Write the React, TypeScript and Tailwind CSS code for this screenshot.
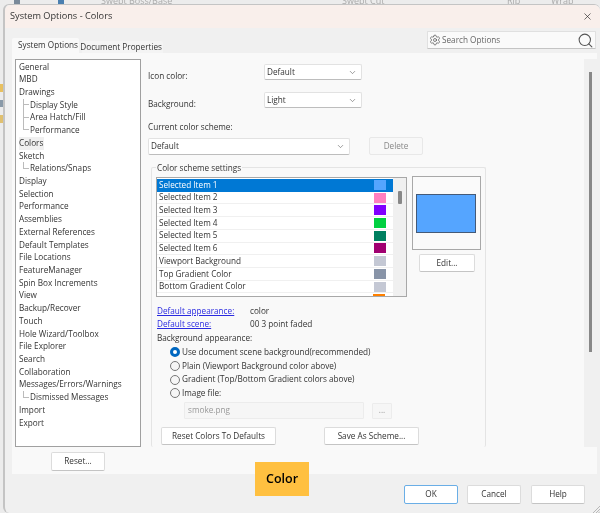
import React from "react";
import { ChevronDown, Search, Settings, X } from "lucide-react";

const treeRows: [string, number, boolean?][] = [
  ["General", 0], ["MBD", 0], ["Drawings", 0],
  ["Display Style", 1, true], ["Area Hatch/Fill", 1, true], ["Performance", 1, false],
  ["Colors", 0], ["Sketch", 0], ["Relations/Snaps", 1, false],
  ["Display", 0], ["Selection", 0], ["Performance", 0], ["Assemblies", 0],
  ["External References", 0], ["Default Templates", 0], ["File Locations", 0],
  ["FeatureManager", 0], ["Spin Box Increments", 0], ["View", 0], ["Backup/Recover", 0],
  ["Touch", 0], ["Hole Wizard/Toolbox", 0], ["File Explorer", 0], ["Search", 0],
  ["Collaboration", 0], ["Messages/Errors/Warnings", 0], ["Dismissed Messages", 1, false],
  ["Import", 0], ["Export", 0],
];

const colorRows = [
  ["Selected Item 1", "bg-[#55a5ff]"],
  ["Selected Item 2", "bg-[#ff80c0]"],
  ["Selected Item 3", "bg-[#8000ff]"],
  ["Selected Item 4", "bg-[#00d040]"],
  ["Selected Item 5", "bg-[#008060]"],
  ["Selected Item 6", "bg-[#a00070]"],
  ["Viewport Background", "bg-[#c4c8d4]"],
  ["Top Gradient Color", "bg-[#8894a8]"],
  ["Bottom Gradient Color", "bg-[#c4c8d4]"],
];

function Btn({ children, className = "" }: { children: React.ReactNode; className?: string }) {
  return (
    <button className={`flex items-center justify-center rounded-[2px] border border-[#dcdcdc] border-b-[#c4c4c4] bg-white text-[#333] ${className}`}>
      {children}
    </button>
  );
}

function Select({ label, className = "" }: { label: string; className?: string }) {
  return (
    <div className={`flex items-center justify-between rounded-[2px] border border-[#e2e2e2] border-b-[#bdbdbd] bg-white pl-[2px] pr-[4px] text-[#333] ${className}`}>
      <span>{label}</span>
      <ChevronDown size={9} strokeWidth={1.5} className="text-[#555]" />
    </div>
  );
}

function Radio({ label, checked = false }: { label: string; checked?: boolean }) {
  return (
    <div className="flex h-[13.7px] items-center">
      {checked ? (
        <span className="h-[10px] w-[10px] rounded-full border-[3px] border-[#0067c0] bg-white" />
      ) : (
        <span className="h-[10px] w-[10px] rounded-full border border-[#777] bg-[#f6f6f6]" />
      )}
      <span className="ml-[2px] text-[#333]">{label}</span>
    </div>
  );
}

export default function App() {
  return (
    <div className="relative flex h-[513px] w-[600px] flex-col overflow-hidden bg-[#ececec] text-[8.2px] leading-[12.72px] font-['Open_Sans',sans-serif] blur-[0.3px]">
      <div className="flex h-[4px] shrink-0 overflow-hidden text-[#aaa]">
        <span className="ml-[14px] h-[4px] w-[6px] bg-[#7a8a9a]" />
        <span className="ml-[38px] h-[4px] w-[6px] bg-[#4a7fb0]" />
        <span className="ml-[37px] mt-[-5px] w-[241px] text-[9px]">Swept Boss/Base</span>
        <span className="mt-[-5px] w-[165px] text-[9px]">Swept Cut</span>
        <span className="mt-[-5px] w-[44px] text-[9px]">Rib</span>
        <span className="mt-[-5px] text-[9px]">Wrap</span>
      </div>
      <div className="flex min-h-0 flex-1">
        <div className="flex w-[3px] shrink-0 flex-col">
          <span className="mt-[80px] h-[8px] w-[3px] bg-[#e8c060]" />
          <span className="mt-[8px] h-[7px] w-[3px] bg-[#8a9aa8]" />
          <span className="mt-[8px] h-[8px] w-[3px] bg-[#e0c070]" />
        </div>
        <div className="flex min-w-0 flex-1 flex-col rounded-t-[6px] rounded-bl-[6px] border-l-2 border-t border-[#c4c4c4] bg-[#f0f0f0]">
          <div className="flex h-[23px] shrink-0 items-center justify-between rounded-t-[6px] bg-[#f9efeb] pl-[5px] pr-[7px]">
            <span className="text-[9.2px] text-[#333]">System Options - Colors</span>
            <X size={11} strokeWidth={1.4} className="text-[#222]" />
          </div>
          <div className="flex h-[25px] shrink-0 items-end justify-between pl-[7px] pr-[4px]">
            <div className="flex items-end">
              <div className="flex h-[15px] w-[67px] items-center justify-end rounded-t-[2px] bg-[#f9f9f9] pr-[1px] text-[#333]">System Options</div>
              <div className="ml-[3px] flex h-[12px] w-[81px] items-center justify-end whitespace-nowrap rounded-t-[2px] bg-[#f4f4f4] pr-[1px] text-[#333]">Document Properties</div>
            </div>
            <div className="mb-[4px] flex h-[18px] w-[169px] items-center rounded-[1px] border border-[#e0e0e0] border-b-[#c4c4c4] bg-[#fafafa] pl-[1px] pr-[1px] text-[#666]">
              <Settings size={12} strokeWidth={1.3} className="text-[#444]" />
              <span className="ml-[1px] flex-1">Search Options</span>
              <Search size={17} strokeWidth={1.5} className="text-[#555]" />
            </div>
          </div>
          <div className="ml-[7px] mr-[3px] flex h-[421px] shrink-0 flex-col bg-[#f9f9f9] pl-[3px] pt-[6px]">
            <div className="flex h-[388px] shrink-0">
              <div className="h-[388px] w-[126px] shrink-0 border border-[#a0a0a0] bg-white pl-[2px] pt-[0.5px] text-[#333]">
                {treeRows.map(([name, level, more], i) => (
                  <div key={i} className="flex h-[12.72px] items-center">
                    {level === 1 && (
                      <span className={`ml-[5px] h-full w-[6px] border-l border-[#bbb] ${more ? "" : "!h-1/2 self-start"}`}>
                        <span className={`block w-full border-b border-[#bbb] ${more ? "h-1/2" : "h-full"}`} />
                      </span>
                    )}
                    <span className={name === "Colors" ? "ml-[1px] bg-[#f0f0f0] pr-[1px]" : "ml-[1px]"}>{name}</span>
                  </div>
                ))}
              </div>
              <div className="ml-[7px] flex min-w-0 flex-1 flex-col text-[#333]">
                <div className="mt-[5px] flex h-[16px] items-center">
                  <span className="mt-[8px] w-[116px]">Icon color:</span>
                  <Select label="Default" className="h-[16px] w-[98px]" />
                </div>
                <div className="mt-[12px] flex h-[16px] items-center">
                  <span className="mt-[8px] w-[116px]">Background:</span>
                  <Select label="Light" className="h-[16px] w-[98px]" />
                </div>
                <div className="mt-[13px] h-[13px]">Current color scheme:</div>
                <div className="mt-[3px] flex h-[18px] items-center">
                  <Select label="Default" className="h-[17px] w-[202px]" />
                  <Btn className="ml-[19px] h-[18px] w-[54px] !border-[#e8e8e8] !bg-[#f8f8f8] !text-[#888]">Delete</Btn>
                </div>
                <div className="relative ml-[3px] mt-[12px] h-[280px] w-[335px] rounded-[2px] border border-b-0 border-[#e4e4e4] pl-[4px] pt-[9px]">
                  <span className="absolute left-[4px] top-[-6px] bg-[#f9f9f9] px-[1px]">Color scheme settings</span>
                  <div className="flex">
                    <div className="flex h-[120px] w-[251px] shrink-0 overflow-hidden border border-[#a8a8a8] bg-white">
                      <div className="flex-1 overflow-hidden pt-[1px]">
                        {colorRows.map(([name, c], i) => (
                          <div key={name} className={`flex h-[12.72px] items-center justify-between pl-[2px] pr-[7px] ${i === 0 ? "bg-[#0078d4] text-white" : "border-b border-[#f0f0f0]"}`}>
                            <span>{name}</span>
                            <span className={`h-[10px] w-[12px] ${c}`} />
                          </div>
                        ))}
                        <div className="ml-[216px] mt-[1px] h-[10px] w-[12px] bg-[#ff8000]" />
                      </div>
                      <div className="flex w-[13px] shrink-0 justify-center bg-[#f0f0f0] pt-[13px]">
                        <div className="h-[13px] w-[4px] rounded-[1px] bg-[#888]" />
                      </div>
                    </div>
                    <div className="ml-[5px] mt-[-1px] flex flex-col">
                      <div className="flex h-[74px] w-[69px] items-center justify-start border border-[#a8a8a8] bg-[#fafafa] pl-[3px]">
                        <div className="h-[39px] w-[60px] border border-[#445a78] bg-[#55a5ff]" />
                      </div>
                      <Btn className="ml-[7px] mt-[4px] h-[18px] w-[56px]">Edit...</Btn>
                    </div>
                  </div>
                  <div className="mt-[8px] flex h-[13.2px] items-center pl-[1px]">
                    <a className="w-[93px] text-[#2a2ae0] underline">Default appearance:</a>
                    <span>color</span>
                  </div>
                  <div className="flex h-[13.2px] items-center pl-[1px]">
                    <a className="w-[93px] text-[#2a2ae0] underline">Default scene:</a>
                    <span>00 3 point faded</span>
                  </div>
                  <div className="flex h-[13.2px] items-center pl-[1px]">Background appearance:</div>
                  <div className="ml-[14px] mt-[1px]">
                    <Radio checked label="Use document scene background(recommended)" />
                    <Radio label="Plain (Viewport Background color above)" />
                    <Radio label="Gradient (Top/Bottom Gradient colors above)" />
                    <Radio label="Image file:" />
                  </div>
                  <div className="ml-[28px] mt-[2px] flex items-center">
                    <div className="flex h-[17px] w-[180px] items-center rounded-[1px] border border-[#ececec] bg-[#f6f6f6] pl-[3px] text-[#999]">smoke.png</div>
                    <div className="ml-[8px] flex h-[16px] w-[20px] items-center justify-center rounded-[1px] border border-[#ececec] bg-[#f6f6f6] text-[#999]">...</div>
                  </div>
                  <div className="ml-[5px] mt-[8px] flex">
                    <Btn className="h-[18px] w-[115px]">Reset Colors To Defaults</Btn>
                    <Btn className="ml-[48px] h-[18px] w-[95px]">Save As Scheme...</Btn>
                  </div>
                </div>
              </div>
              <div className="flex h-[388px] w-[13px] shrink-0 justify-center bg-[#f0f0f0] pt-[13px]">
                <div className="h-[280px] w-[3px] bg-[#888]" />
              </div>
            </div>
            <div className="ml-[36px] mt-[5px]">
              <Btn className="h-[19px] w-[54px]">Reset...</Btn>
            </div>
          </div>
          <div className="flex flex-1 items-start justify-end pr-[15px] pt-[11px]">
            <Btn className="h-[19px] w-[54px] !border-[#6aaee6]">OK</Btn>
            <Btn className="ml-[9px] h-[19px] w-[54px]">Cancel</Btn>
            <Btn className="ml-[10px] h-[19px] w-[54px]">Help</Btn>
          </div>
        </div>
      </div>
      <div className="absolute left-[255px] top-[462px] flex h-[34px] w-[54px] items-center justify-center bg-[#ffc040] text-[12.5px] font-semibold text-black">Color</div>
      <svg className="absolute bottom-0 right-0 h-[8px] w-[8px]" viewBox="0 0 8 8" stroke="#aaa" strokeWidth="0.8">
        <path d="M8 1 L1 8 M8 4 L4 8 M8 6.5 L6.5 8" />
      </svg>
    </div>
  );
}
